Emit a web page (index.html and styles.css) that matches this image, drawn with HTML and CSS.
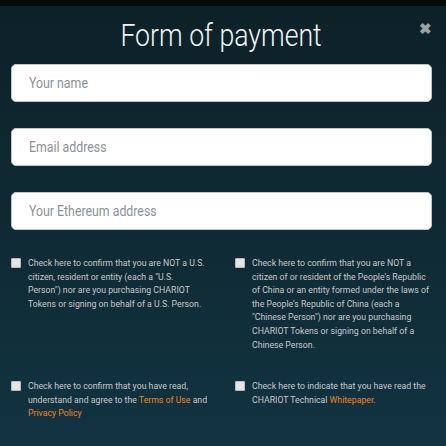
FILE: index.html
```html
<!DOCTYPE html>
<html>
<head>
<meta charset="utf-8">
<link rel="stylesheet" href="styles.css">
</head>
<body>
<div class="backdrop"></div>
<div class="modal">
  <div class="header">
    <h1 class="title">Form of payment</h1>
    <span class="close">&#10006;</span>
  </div>
  <div class="fields">
    <div class="field"><span class="ph">Your name</span></div>
    <div class="field"><span class="ph">Email address</span></div>
    <div class="field"><span class="ph">Your Ethereum address</span></div>
  </div>
  <div class="checks">
    <div class="check">
      <span class="box"></span>
      <p class="label">Check here to confirm that you are NOT a U.S.<br>citizen, resident or entity (each a "U.S.<br>Person") nor are you purchasing CHARIOT<br>Tokens or signing on behalf of a U.S. Person.</p>
    </div>
    <div class="check">
      <span class="box"></span>
      <p class="label">Check here to confirm that you are NOT a<br>citizen of or resident of the People's Republic<br>of China or an entity formed under the laws of<br>the People's Republic of China (each a<br>"Chinese Person") nor are you purchasing<br>CHARIOT Tokens or signing on behalf of a<br>Chinese Person.</p>
    </div>
    <div class="check">
      <span class="box"></span>
      <p class="label">Check here to confirm that you have read,<br>understand and agree to the <a class="link">Terms of Use</a> and<br><a class="link">Privacy Policy</a></p>
    </div>
    <div class="check">
      <span class="box"></span>
      <p class="label">Check here to indicate that you have read the<br>CHARIOT Technical <a class="link">Whitepaper</a>.</p>
    </div>
  </div>
</div>
</body>
</html>
```
FILE: styles.css
```css
html, body {
  margin: 0;
  padding: 0;
  background: #04090b;
  width: 446px;
  height: 446px;
  overflow: hidden;
  font-family: Roboto, "Liberation Sans", sans-serif;
}
.backdrop {
  height: 6px;
  background: #03080a;
}
.modal {
  height: 440px;
  background: linear-gradient(to bottom, #0d2128 0%, #0f2a33 50%, #123342 100%);
  padding: 0 14px 0 11px;
  box-sizing: border-box;
}
.header {
  position: relative;
  height: 58px;
  display: flex;
  align-items: center;
  justify-content: center;
}
.title {
  margin: 0;
  font-weight: 300;
  font-size: 31px;
  color: #f2f4f5;
  transform: scaleX(0.86);
  white-space: nowrap;
}
.close {
  position: absolute;
  right: 0;
  top: 14px;
  font-size: 15px;
  font-weight: bold;
  color: #9aa1a5;
}
.fields {
  display: flex;
  flex-direction: column;
  gap: 26px;
}
.field {
  height: 38px;
  box-sizing: border-box;
  background: #fff;
  border: 1px solid #bfc5c8;
  border-radius: 5px;
  padding-left: 17px;
  display: flex;
  align-items: center;
}
.ph {
  color: #8b9197;
  font-size: 14.5px;
  white-space: nowrap;
  transform: scaleX(0.85);
  transform-origin: left center;
}
.checks {
  display: grid;
  grid-template-columns: 197px 197px;
  column-gap: 27px;
  row-gap: 28px;
  margin-top: 26px;
}
.check {
  display: flex;
  align-items: flex-start;
  gap: 7px;
}
.box {
  flex: none;
  width: 8px;
  height: 8px;
  margin-top: 2px;
  background: #e4e5e6;
  border: 1px solid #b9bcbe;
  border-radius: 1px;
}
.label {
  margin: 0;
  font-size: 9.8px;
  line-height: 13.6px;
  color: #c6c9ca;
  white-space: nowrap;
  transform: scaleX(0.89);
  transform-origin: left top;
}
.link {
  color: #ee8425;
}
```
